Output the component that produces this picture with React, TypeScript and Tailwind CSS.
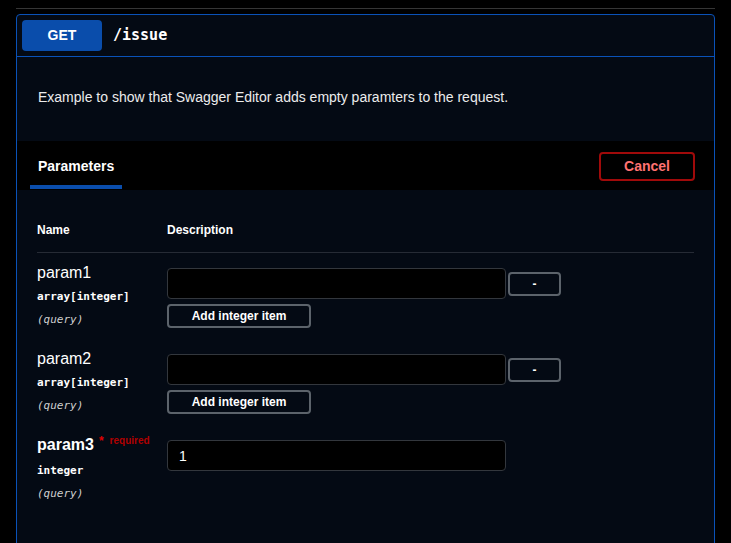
const sans = { fontFamily: '"Liberation Sans", Arial, sans-serif' };
const mono = { fontFamily: '"DejaVu Sans Mono", "Liberation Mono", monospace' };

type Param = {
  name: string;
  type: string;
  required?: boolean;
  array?: boolean;
  value?: string;
};

const params: Param[] = [
  { name: "param1", type: "array[integer]", array: true },
  { name: "param2", type: "array[integer]", array: true },
  { name: "param3", type: "integer", required: true, value: "1" },
];

function ParamRow({ p }: { p: Param }) {
  return (
    <div className="flex py-[11px]">
      <div className="w-[130px] shrink-0">
        <div
          className={`text-[16px] leading-[18px] text-white ${p.required ? "font-bold" : ""}`}
        >
          {p.name}
          {p.required && (
            <>
              <span className="relative -top-[5px] pl-[5px] text-[12px] font-bold text-[#e00000]">*</span>
              <span className="relative -top-[6px] pl-[6px] text-[10px] font-bold text-[#b00000]">required</span>
            </>
          )}
        </div>
        <div className="mt-[8px] text-[11px] font-bold leading-[14px] text-white" style={mono}>
          {p.type}
        </div>
        <div className="mt-[9px] text-[11px] italic leading-[14px] text-[#d0d0d0]" style={mono}>
          (query)
        </div>
      </div>
      <div className="mt-[4px]">
        <div className="flex items-start">
          <input
            readOnly
            value={p.value ?? ""}
            className="h-[31px] w-[339px] rounded-[4px] border border-[#33373d] bg-black px-[11px] text-[14px] text-white outline-none"
            style={sans}
          />
          {p.array && (
            <button className="ml-[2px] mt-[4px] h-[24px] w-[53px] rounded-[4px] border-2 border-[#5c636b] text-[12px] font-bold leading-none text-white">
              -
            </button>
          )}
        </div>
        {p.array && (
          <button className="mt-[5px] h-[24px] w-[144px] rounded-[4px] border-2 border-[#5c636b] text-[12px] font-bold leading-none text-white">
            Add integer item
          </button>
        )}
      </div>
    </div>
  );
}

export default function App() {
  return (
    <div className="h-[543px] w-[731px] overflow-hidden bg-black" style={sans}>
      <div className="mx-4 mt-[8px] h-px bg-[#363636]" />
      <div className="mx-4 mt-[5px] h-[600px] rounded-[4px] border border-[#0a52b8] bg-[#040a14]">
        <div className="flex items-center border-b border-[#0a52b8] p-[5px]">
          <div className="flex h-[31px] w-[80px] items-center justify-center rounded-[4px] bg-[#0a4dab] text-[14px] font-bold text-white">
            GET
          </div>
          <div className="px-[11px] text-[15px] font-bold text-white" style={mono}>
            /issue
          </div>
        </div>

        <div className="px-[21px] pb-[35px] pt-[31px] text-[14px] leading-[18px] text-[#ececec]">
          Example to show that Swagger Editor adds empty paramters to the request.
        </div>

        <div className="flex h-[49px] items-start justify-between bg-black pl-[13px] pr-[19px]">
          <div className="mt-[16px] border-b-4 border-[#0a4dab] px-2 pb-[10px] text-[14px] font-bold leading-[18px] text-white">
            Parameters
          </div>
          <button className="mt-[11px] h-[29px] w-[96px] rounded-[4px] border-2 border-[#a00a0a] text-[14px] font-bold text-[#ff7272]">
            Cancel
          </button>
        </div>

        <div className="px-5">
          <div className="flex border-b border-[#262b35] pb-[14px] pt-[32px] text-[12px] font-bold leading-[16px] text-white">
            <div className="w-[130px]">Name</div>
            <div>Description</div>
          </div>
          {params.map((p) => (
            <ParamRow key={p.name} p={p} />
          ))}
        </div>
      </div>
    </div>
  );
}
